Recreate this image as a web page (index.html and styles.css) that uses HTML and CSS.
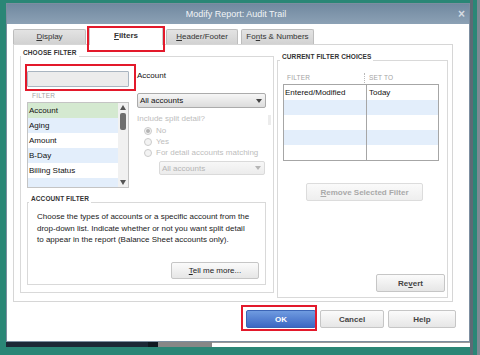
FILE: index.html
```html
<!DOCTYPE html>
<html lang="en">
<head>
  <meta charset="UTF-8" />
  <title>Modify Report: Audit Trail</title>
  <link rel="stylesheet" href="styles.css">
</head>
<body>
  <div class="screen">
    <div class="window">
      <div class="dialog">
        <div class="titlebar">
          <span></span>
          <span class="title">Modify Report: Audit Trail</span>
          <span class="close">×</span>
        </div>

        <div class="dialog-body">
          <div class="tabs">
            <div class="tab tab-display"><u>D</u>isplay</div>
            <div class="tab tab-filters active"><u>F</u>ilters<span class="mark mark-tab"></span></div>
            <div class="tab tab-header"><u>H</u>eader/Footer</div>
            <div class="tab tab-fonts">Fo<u>n</u>ts &amp; Numbers</div>
          </div>

          <div class="panel">
            <!-- left: choose filter -->
            <div class="group choose">
              <div class="group-title">CHOOSE FILTER</div>
              <div class="choose-cols">
                <div class="col-list">
                  <div class="search"><span class="mark mark-search"></span></div>
                  <div class="small-label">FILTER</div>
                  <div class="list">
                    <div class="list-rows">
                      <div class="row selected">Account</div>
                      <div class="row alt">Aging</div>
                      <div class="row">Amount</div>
                      <div class="row alt">B-Day</div>
                      <div class="row">Billing Status</div>
                      <div class="row alt"></div>
                    </div>
                    <div class="scrollbar">
                      <span class="arrow up"></span>
                      <span class="thumb"></span>
                      <span class="arrow down"></span>
                    </div>
                  </div>
                </div>

                <div class="col-options">
                  <div class="field-name">Account</div>
                  <div class="select">All accounts<span class="caret"></span></div>
                  <div class="split">
                    <div class="split-label">Include split detail?</div>
                    <span class="split-bar"></span>
                  </div>
                  <div class="radio"><span class="dot checked"></span>No</div>
                  <div class="radio"><span class="dot"></span>Yes</div>
                  <div class="radio"><span class="dot"></span>For detail accounts matching</div>
                  <div class="select disabled">All accounts<span class="caret"></span></div>
                </div>
              </div>

              <div class="group account">
                <div class="group-title">ACCOUNT FILTER</div>
                <p class="desc">Choose the types of accounts or a specific account from the<br>drop-down list. Indicate whether or not you want split detail<br>to appear in the report (Balance Sheet accounts only).</p>
                <button class="btn btn-tell"><u>T</u>ell me more...</button>
              </div>
            </div>

            <!-- right: current filter choices -->
            <div class="group current">
              <div class="group-title">CURRENT FILTER CHOICES</div>
              <div class="choices-head">
                <span>FILTER</span>
                <span>SET TO</span>
              </div>
              <div class="choices">
                <div class="crow"><span>Entered/Modified</span><span>Today</span></div>
                <div class="crow alt"><span></span><span></span></div>
                <div class="crow"><span></span><span></span></div>
                <div class="crow alt"><span></span><span></span></div>
                <div class="crow"><span></span><span></span></div>
              </div>
              <button class="btn btn-remove" disabled><u>R</u>emove Selected Filter</button>
              <button class="btn btn-revert">Re<u>v</u>ert</button>
            </div>
          </div>

          <div class="actions">
            <button class="btn btn-ok">OK<span class="mark mark-ok"></span></button>
            <button class="btn btn-cancel">Cancel</button>
            <button class="btn btn-help">Help</button>
          </div>
        </div>
      </div>
      <div class="taskbar">
        <span class="seg seg-dark"></span>
        <span class="seg seg-darker"></span>
        <span class="seg seg-gray"></span>
        <span class="seg seg-white"></span>
      </div>
    </div>
    <div class="edge"></div>
  </div>
</body>
</html>
```

FILE: styles.css
```css
:root {
  --teal: #2a8676;
  --line: #d9d9d9;
  --alt: #e3eefb;
  --muted: #a8a8a8;
  --red: #e3192b;
}
* { box-sizing: border-box; }
body {
  margin: 0;
  font-family: "Liberation Sans", Arial, sans-serif;
  font-size: 8px;
  color: #222;
}
u { text-decoration: underline; }

.screen {
  width: 480px;
  height: 355px;
  background: var(--teal);
  display: flex;
  overflow: hidden;
}
.window {
  margin: 3px 0 0 6px;
  width: 464px;
}
.dialog {
  height: 339px;
  border: 1px solid #7c8ea0;
  background: #fff;
  display: flex;
  flex-direction: column;
}

/* title bar */
.titlebar {
  height: 20px;
  background: linear-gradient(#7189a0, #8ca1b5);
  color: #f1f4f7;
  display: grid;
  grid-template-columns: 1fr auto 1fr;
  align-items: center;
  padding-right: 4px;
}
.title { font-size: 9px; }
.close {
  justify-self: end;
  font-size: 12px;
  font-weight: bold;
  color: #d5dbe2;
  line-height: 12px;
}

.dialog-body {
  padding: 2px 13px 0 6px;
}

/* tabs */
.tabs {
  display: flex;
  align-items: flex-end;
  gap: 3px;
  height: 18px;
}
.tab {
  height: 15px;
  line-height: 14px;
  text-align: center;
  border: 1px solid #bdbdbd;
  border-bottom: none;
  border-radius: 2px 2px 0 0;
  background: linear-gradient(#e3e3e3, #d2d2d2);
  color: #333;
}
.tab-display { width: 73px; }
.tab-filters { width: 74px; }
.tab-header { width: 72px; }
.tab-fonts { width: 73px; }
.tab.active {
  height: 19px;
  line-height: 18px;
  margin-bottom: -1px;
  background: #fff;
  border-color: #cbcbcb;
  font-weight: bold;
  position: relative;
  z-index: 1;
}

/* red annotation boxes */
.mark {
  position: absolute;
  border: 2px solid var(--red);
  pointer-events: none;
}
.mark-tab { left: -3px; right: -3px; top: -1px; bottom: -7px; }
.mark-search { left: -3px; right: -8px; top: -8px; bottom: -5px; }
.mark-ok { left: -6px; right: -2px; top: -6px; bottom: -4px; }

/* panel */
.panel {
  width: 440px;
  height: 258px;
  border: 1px solid #d6d6d6;
  padding: 11px 0 0 6px;
  display: flex;
  gap: 3px;
  align-items: flex-start;
}
.group {
  border: 1px solid var(--line);
}
.group-title {
  width: max-content;
  height: 8px;
  line-height: 8px;
  margin: -8px 0 0 0;
  padding: 0 2px;
  background: #fff;
  font-size: 6.5px;
  font-weight: bold;
  color: #333;
  letter-spacing: 0.1px;
}

.choose {
  width: 254px;
  height: 237px;
}
.choose-cols {
  display: flex;
  gap: 8px;
  padding-left: 6px;
}
.col-list { width: 102px; }
.search {
  position: relative;
  margin-top: 14px;
  height: 16px;
  background: #ececec;
  border: 1px solid #a9b5c1;
  border-radius: 1px;
}
.small-label {
  margin-top: 5px;
  height: 8px;
  line-height: 8px;
  padding-left: 5px;
  font-size: 6.5px;
  color: #a3a3a3;
  letter-spacing: 0.2px;
}
.list {
  margin-top: 2px;
  height: 86px;
  border: 1px solid #c4c4c4;
  display: flex;
  overflow: hidden;
}
.list-rows { flex: 1; }
.row {
  height: 15px;
  line-height: 15px;
  padding-left: 1px;
  color: #111;
}
.row.alt { background: var(--alt); }
.row.selected { background: #d4e9d0; }
.scrollbar {
  width: 10px;
  background: #f1f1f1;
  display: flex;
  flex-direction: column;
  align-items: center;
}
.arrow {
  width: 0;
  height: 0;
  border-left: 3px solid transparent;
  border-right: 3px solid transparent;
}
.arrow.up {
  margin-top: 2px;
  border-bottom: 5px solid #555;
}
.thumb {
  margin-top: 3px;
  width: 6px;
  height: 17px;
  border-radius: 2px;
  background: #6e6e6e;
}
.arrow.down {
  margin-top: auto;
  margin-bottom: 2px;
  border-top: 5px solid #555;
}

.col-options { width: 130px; }
.field-name {
  margin-top: 13px;
  line-height: 11px;
  color: #111;
}
.select {
  margin-top: 12px;
  width: 129px;
  height: 15px;
  line-height: 13px;
  padding-left: 2px;
  border: 1px solid #ababab;
  border-radius: 2px;
  background: linear-gradient(#f6f6f6, #dcdcdc);
  color: #111;
  display: flex;
  justify-content: space-between;
  align-items: center;
}
.caret {
  width: 0;
  height: 0;
  margin-right: 3px;
  border-left: 3px solid transparent;
  border-right: 3px solid transparent;
  border-top: 4px solid #444;
}
.select.disabled {
  margin: 3px 0 0 22px;
  width: 106px;
  height: 14px;
  background: linear-gradient(#f7f7f7, #ececec);
  border-color: #dadada;
  color: #b5b5b5;
}
.select.disabled .caret { border-top-color: #b5b5b5; }
.split {
  margin-top: 5px;
  display: flex;
  justify-content: space-between;
}
.split-label {
  line-height: 11px;
  color: #bdbdbd;
}
.split-bar {
  width: 3px;
  height: 10px;
  margin: 2px -4px 0 0;
  background: #ececec;
}
.radio {
  height: 11px;
  line-height: 11px;
  padding-left: 7px;
  display: flex;
  align-items: center;
  gap: 4px;
  color: #bdbdbd;
}
.dot {
  width: 8px;
  height: 8px;
  border: 1px solid #cbcbcb;
  border-radius: 50%;
  background: #f3f3f3;
  display: flex;
  align-items: center;
  justify-content: center;
}
.dot.checked::after {
  content: "";
  width: 4px;
  height: 4px;
  border-radius: 50%;
  background: #b3b3b3;
}

.account {
  margin: 14px 0 0 6px;
  width: 239px;
  height: 83px;
  display: flex;
  flex-direction: column;
}
.account .group-title { margin-left: 1px; }
.desc {
  margin: 0;
  padding: 8px 0 0 9px;
  line-height: 11.5px;
  white-space: nowrap;
  color: #222;
}

/* buttons */
.btn {
  font-family: inherit;
  font-size: 8px;
  font-weight: bold;
  color: #444;
  height: 18px;
  padding: 0;
  border: 1px solid #c6c6c6;
  border-radius: 2px;
  background: linear-gradient(#fbfbfb, #e6e6e6);
  position: relative;
}
.btn-tell {
  margin: auto 6px 5px auto;
  width: 88px;
  height: 17px;
  font-weight: normal;
  color: #222;
}

.current {
  margin-top: 4px;
  width: 171px;
  height: 238px;
  display: flex;
  flex-direction: column;
}
.current .group-title { margin-left: 2px; }
.choices-head {
  margin: 12px 0 0 5px;
  width: 156px;
  height: 10px;
  display: flex;
  font-size: 6.5px;
  color: #a3a3a3;
  letter-spacing: 0.2px;
}
.choices-head span {
  line-height: 10px;
  padding-left: 4px;
}
.choices-head span:first-child {
  width: 82px;
  border-right: 1px dotted #b9b9b9;
}
.choices {
  margin: 1px 0 0 5px;
  width: 156px;
  border: 1px solid #a6a6a6;
}
.crow {
  display: flex;
  height: 15px;
  line-height: 15px;
  color: #111;
}
.crow.alt { background: var(--alt); }
.crow span:first-child {
  width: 82px;
  padding-left: 1px;
}
.crow span:last-child {
  flex: 1;
  padding-left: 2px;
  border-left: 1px solid #a6a6a6;
}
.btn-remove {
  margin: 22px 0 0 28px;
  width: 117px;
  color: #a9a9a9;
  border-color: #dcdcdc;
  background: linear-gradient(#fafafa, #eeeeee);
}
.btn-revert {
  margin: auto 2px 5px auto;
  width: 69px;
}

.actions {
  margin-top: 8px;
  display: flex;
  justify-content: flex-end;
  gap: 4px;
}
.btn-ok {
  width: 70px;
  color: #fff;
  border-color: #3b64b6;
  background: linear-gradient(#6f9be0, #3c67c3);
}
.btn-cancel { width: 64px; }
.btn-help { width: 68px; }

/* strip under the dialog */
.taskbar {
  height: 5px;
  display: flex;
}
.seg { height: 5px; }
.seg-dark { width: 142px; background: #1c2836; }
.seg-darker { width: 10px; background: #0f1820; }
.seg-gray { width: 54px; background: #878787; }
.seg-white {
  flex: 1;
  background: #fff;
  border-top: 1px solid #9a9a9a;
}
.edge {
  width: 10px;
  background: linear-gradient(90deg, #5c6a75 0 3px, var(--teal) 3px 7px, #7d8a94 7px);
}
```
